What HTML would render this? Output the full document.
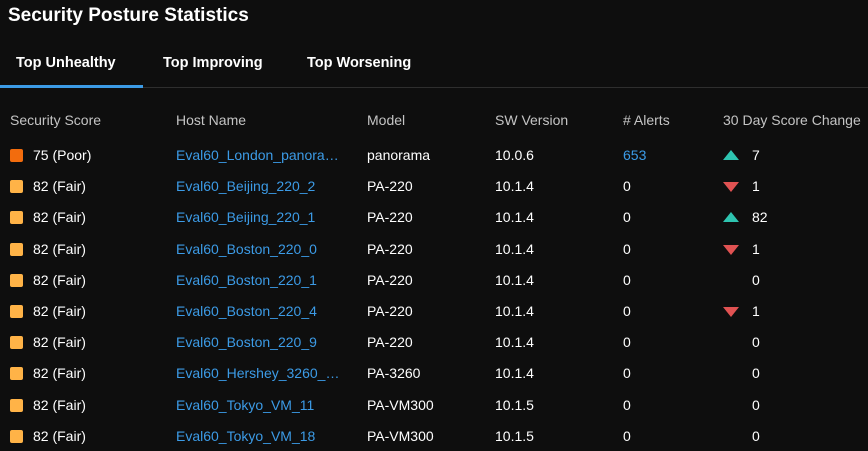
<!DOCTYPE html>
<html><head><style>
body{margin:0;width:868px;height:451px;background:#0e0e0e;font-family:"Liberation Sans",sans-serif;color:#fff;overflow:hidden;position:relative}
.a{position:absolute;white-space:nowrap}
.t{font-size:19px;font-weight:bold;left:8px;top:5px}
.tab{font-size:14.5px;font-weight:bold;top:55px}
.h{font-size:14px;color:#c4c4c4;top:112px}
.r{font-size:14px;color:#fff}
.l{color:#3c9be6}
.sq{width:13px;height:13px;border-radius:2px;left:10px}
.up{width:0;height:0;border-left:8px solid transparent;border-right:8px solid transparent;border-bottom:10px solid #2ec4b0;left:723px}
.dn{width:0;height:0;border-left:8px solid transparent;border-right:8px solid transparent;border-top:10px solid #e05252;left:723px}
</style></head><body>
<div class="a t">Security Posture Statistics</div>
<div class="a tab" style="left:16px">Top Unhealthy</div>
<div class="a tab" style="left:163px">Top Improving</div>
<div class="a tab" style="left:307px">Top Worsening</div>
<div class="a" style="left:0;top:87px;width:868px;height:1px;background:#2e2e2e"></div>
<div class="a" style="left:0;top:85px;width:143px;height:3px;background:#3c9be6"></div>
<div class="a h" style="left:10px">Security Score</div>
<div class="a h" style="left:176px">Host Name</div>
<div class="a h" style="left:367px">Model</div>
<div class="a h" style="left:495px">SW Version</div>
<div class="a h" style="left:623px"># Alerts</div>
<div class="a h" style="left:723px">30 Day Score Change</div>
<div id="rows"></div>
<script>
var d=[["75 (Poor)","#f26c0d","Eval60_London_panora…","panorama","10.0.6","653","u","7"],
["82 (Fair)","#ffb347","Eval60_Beijing_220_2","PA-220","10.1.4","0","d","1"],
["82 (Fair)","#ffb347","Eval60_Beijing_220_1","PA-220","10.1.4","0","u","82"],
["82 (Fair)","#ffb347","Eval60_Boston_220_0","PA-220","10.1.4","0","d","1"],
["82 (Fair)","#ffb347","Eval60_Boston_220_1","PA-220","10.1.4","0","","0"],
["82 (Fair)","#ffb347","Eval60_Boston_220_4","PA-220","10.1.4","0","d","1"],
["82 (Fair)","#ffb347","Eval60_Boston_220_9","PA-220","10.1.4","0","","0"],
["82 (Fair)","#ffb347","Eval60_Hershey_3260_…","PA-3260","10.1.4","0","","0"],
["82 (Fair)","#ffb347","Eval60_Tokyo_VM_11","PA-VM300","10.1.5","0","","0"],
["82 (Fair)","#ffb347","Eval60_Tokyo_VM_18","PA-VM300","10.1.5","0","","0"]];
var h="";
d.forEach(function(r,i){var y=147+i*31.2;
h+='<div class="a sq" style="top:'+(y+2)+'px;background:'+r[1]+'"></div>';
h+='<div class="a r" style="left:33px;top:'+y+'px">'+r[0]+'</div>';
h+='<div class="a r l" style="left:176px;top:'+y+'px">'+r[2]+'</div>';
h+='<div class="a r" style="left:367px;top:'+y+'px">'+r[3]+'</div>';
h+='<div class="a r" style="left:495px;top:'+y+'px">'+r[4]+'</div>';
h+='<div class="a r'+(i==0?' l':'')+'" style="left:623px;top:'+y+'px">'+r[5]+'</div>';
if(r[6]=="u")h+='<div class="a up" style="top:'+(y+3)+'px"></div>';
if(r[6]=="d")h+='<div class="a dn" style="top:'+(y+4)+'px"></div>';
h+='<div class="a r" style="left:752px;top:'+y+'px">'+r[7]+'</div>';});
document.getElementById("rows").innerHTML=h;
</script>
</body></html>
